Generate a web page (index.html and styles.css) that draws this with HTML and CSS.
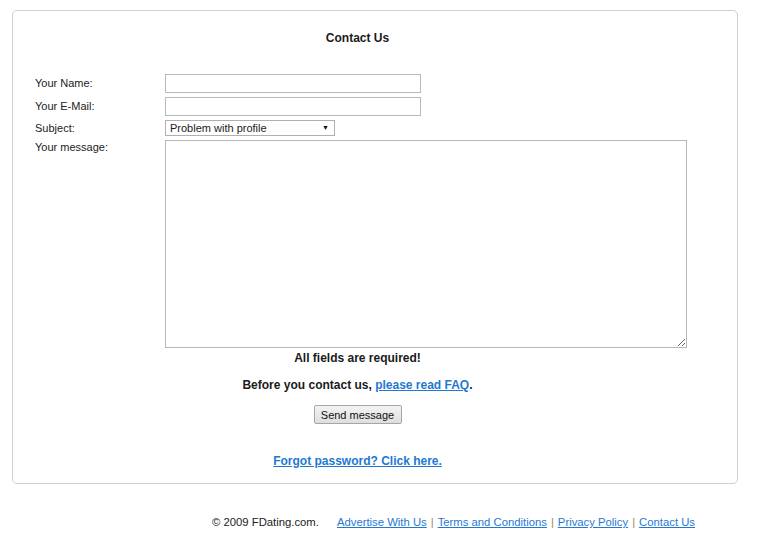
FILE: index.html
```html
<!DOCTYPE html>
<html>
<head>
<meta charset="utf-8">
<title>Contact Us</title>
<link rel="stylesheet" href="styles.css">
</head>
<body>
<div class="page">
  <div class="card">
    <div class="content">
      <h1 class="title">Contact Us</h1>
      <form class="form">
        <label class="label" for="name">Your Name:</label>
        <input class="field" id="name" type="text">
        <label class="label" for="email">Your E-Mail:</label>
        <input class="field" id="email" type="text">
        <label class="label" for="subject">Subject:</label>
        <div class="select-wrap">
          <select class="select" id="subject">
            <option>Problem with profile</option>
          </select>
          <span class="arrow">&#9660;</span>
        </div>
        <label class="label label-top" for="msg">Your message:</label>
        <textarea class="message" id="msg"></textarea>
      </form>
      <p class="note">All fields are required!</p>
      <p class="note note-faq">Before you contact us, <a href="#">please read FAQ</a>.</p>
      <div class="actions"><button class="send" type="button">Send message</button></div>
      <p class="note note-forgot"><a href="#">Forgot password? Click here.</a></p>
    </div>
  </div>
  <div class="footer">
    <span class="copy">&copy; 2009 FDating.com.</span>
    <span class="links"><a href="#">Advertise With Us</a><span class="sep">|</span><a href="#">Terms and Conditions</a><span class="sep">|</span><a href="#">Privacy Policy</a><span class="sep">|</span><a href="#">Contact Us</a></span>
  </div>
</div>
</body>
</html>
```

FILE: styles.css
```css
html, body {
  margin: 0;
  padding: 0;
  background: #ffffff;
}

body {
  font-family: "Liberation Sans", Arial, sans-serif;
  font-size: 11px;
  color: #222222;
}

.page {
  padding: 10px 0 0 12px;
}

.card {
  box-sizing: border-box;
  width: 726px;
  height: 474px;
  border: 1px solid #cfcfcf;
  border-radius: 5px;
  padding: 20px 0 0 22px;
}

.content {
  width: 645px;
}

.title {
  margin: 0;
  font-size: 12px;
  line-height: 15px;
  font-weight: bold;
  text-align: center;
  color: #1a1a1a;
}

.form {
  display: grid;
  grid-template-columns: 130px 522px;
  row-gap: 4px;
  align-items: center;
  margin: 28px 0 0 0;
}

.label {
  font-size: 11px;
  line-height: 15px;
  color: #222222;
}

.label-top {
  align-self: start;
}

.field {
  box-sizing: border-box;
  width: 256px;
  height: 19px;
  margin: 0;
  padding: 1px 3px;
  border: 1px solid #b8b8b8;
  border-radius: 0;
  font-family: inherit;
  font-size: 11px;
  background: #ffffff;
}

.select-wrap {
  position: relative;
  width: 170px;
  height: 16px;
}

.select {
  box-sizing: border-box;
  -webkit-appearance: none;
  appearance: none;
  width: 170px;
  height: 16px;
  margin: 0;
  padding: 0 0 0 4px;
  border: 1px solid #b0b0b0;
  border-radius: 0;
  background: #ffffff;
  font-family: inherit;
  font-size: 11px;
  line-height: 14px;
  color: #1a1a1a;
}

.arrow {
  position: absolute;
  right: 6px;
  top: 3px;
  font-size: 7px;
  line-height: 10px;
  color: #111111;
  pointer-events: none;
}

.message {
  box-sizing: border-box;
  display: block;
  width: 522px;
  height: 208px;
  margin: 0;
  padding: 2px;
  border: 1px solid #b8b8b8;
  border-radius: 0;
  font-family: inherit;
  font-size: 11px;
  background: #ffffff;
}

.note {
  margin: 3px 0 0 0;
  font-size: 12px;
  line-height: 15px;
  font-weight: bold;
  text-align: center;
  color: #1a1a1a;
}

.note-faq {
  margin-top: 12px;
}

.note a,
.links a {
  color: #1f78d1;
  text-decoration: underline;
}

.actions {
  display: flex;
  justify-content: center;
  margin-top: 12px;
}

.send {
  box-sizing: border-box;
  width: 88px;
  height: 19px;
  margin: 0;
  padding: 0;
  border: 1px solid #a6a6a6;
  border-radius: 2px;
  background: linear-gradient(#f4f4f4, #dedede);
  font-family: inherit;
  font-size: 11px;
  line-height: 16px;
  color: #111111;
}

.note-forgot {
  margin-top: 30px;
}

.footer {
  display: flex;
  align-items: center;
  margin-top: 31px;
  padding-left: 200px;
  font-size: 11.3px;
  line-height: 14px;
  color: #222222;
}

.copy {
  margin-right: 18px;
}

.sep {
  color: #9c8a52;
  margin: 0 4px;
}
```
